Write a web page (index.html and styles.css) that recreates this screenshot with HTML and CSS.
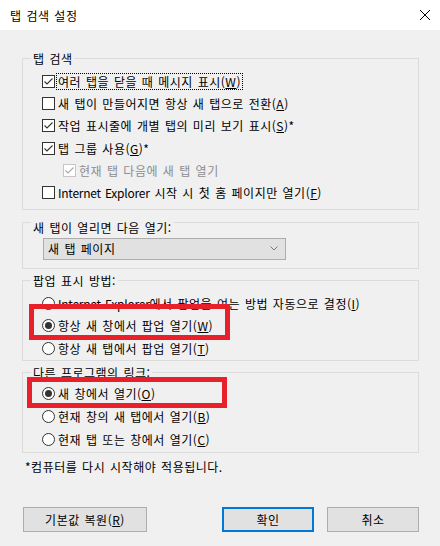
FILE: index.html
```html
<!DOCTYPE html>
<html lang="ko">
<head>
<meta charset="utf-8">
<title>탭 검색 설정</title>
<link rel="stylesheet" href="styles.css">
</head>
<body>
<div class="window">
  <header class="titlebar">
    <span class="title">탭 검색 설정</span>
    <svg class="close" width="12" height="12" viewBox="0 0 12 12"><path d="M1 1L11 11M11 1L1 11" stroke="#000" stroke-width="1"/></svg>
  </header>
  <main class="content">
    <fieldset class="group g1">
      <legend>탭 검색</legend>
      <div class="row"><svg class="cb" viewBox="0 0 13 13"><rect x="0.5" y="0.5" width="12" height="12" fill="#fff" stroke="#333"/><path d="M2.5 6.5L5 9L10.5 3.5" fill="none" stroke="#333" stroke-width="1.1"/></svg><span class="lbl focus">여러 탭을 닫을 때 메시지 표시(<u>W</u>)</span></div>
      <div class="row"><svg class="cb" viewBox="0 0 13 13"><rect x="0.5" y="0.5" width="12" height="12" fill="#fff" stroke="#333"/></svg><span class="lbl">새 탭이 만들어지면 항상 새 탭으로 전환(<u>A</u>)</span></div>
      <div class="row"><svg class="cb" viewBox="0 0 13 13"><rect x="0.5" y="0.5" width="12" height="12" fill="#fff" stroke="#333"/><path d="M2.5 6.5L5 9L10.5 3.5" fill="none" stroke="#333" stroke-width="1.1"/></svg><span class="lbl">작업 표시줄에 개별 탭의 미리 보기 표시(<u>S</u>)*</span></div>
      <div class="row"><svg class="cb" viewBox="0 0 13 13"><rect x="0.5" y="0.5" width="12" height="12" fill="#fff" stroke="#333"/><path d="M2.5 6.5L5 9L10.5 3.5" fill="none" stroke="#333" stroke-width="1.1"/></svg><span class="lbl">탭 그룹 사용(<u>G</u>)*</span></div>
      <div class="row sub disabled"><svg class="cb" viewBox="0 0 13 13"><rect x="0.5" y="0.5" width="12" height="12" fill="#fff" stroke="#c6c6c6"/><path d="M2.5 6.5L5 9L10.5 3.5" fill="none" stroke="#a8a8a8" stroke-width="1.1"/></svg><span class="lbl">현재 탭 다음에 새 탭 열기</span></div>
      <div class="row"><svg class="cb" viewBox="0 0 13 13"><rect x="0.5" y="0.5" width="12" height="12" fill="#fff" stroke="#333"/></svg><span class="lbl"><span class="latin">Internet Explorer</span> 시작 시 첫 홈 페이지만 열기(<u>F</u>)</span></div>
    </fieldset>

    <fieldset class="group g2">
      <legend>새 탭이 열리면 다음 열기:</legend>
      <div class="select"><span>새 탭 페이지</span><svg class="chev" width="8" height="5" viewBox="0 0 8 5"><path d="M0.5 0.5L4 4L7.5 0.5" fill="none" stroke="#7a7a7a" stroke-width="1"/></svg></div>
    </fieldset>

    <fieldset class="group g3">
      <legend>팝업 표시 방법:</legend>
      <div class="row r"><svg class="rb" viewBox="0 0 13 13"><circle cx="6.5" cy="6.5" r="6" fill="#fff" stroke="#333"/></svg><span class="lbl"><span class="latin">Internet Explorer</span>에서 팝업을 여는 방법 자동으로 결정(<u>I</u>)</span></div>
      <div class="row r"><svg class="rb" viewBox="0 0 13 13"><circle cx="6.5" cy="6.5" r="6" fill="#fff" stroke="#333"/><circle cx="6.5" cy="6.5" r="3.5" fill="#333"/></svg><span class="lbl">항상 새 창에서 팝업 열기(<u>W</u>)</span></div>
      <div class="row r"><svg class="rb" viewBox="0 0 13 13"><circle cx="6.5" cy="6.5" r="6" fill="#fff" stroke="#333"/></svg><span class="lbl">항상 새 탭에서 팝업 열기(<u>T</u>)</span></div>
    </fieldset>

    <fieldset class="group g4">
      <legend>다른 프로그램의 링크:</legend>
      <div class="row r4"><svg class="rb" viewBox="0 0 13 13"><circle cx="6.5" cy="6.5" r="6" fill="#fff" stroke="#333"/><circle cx="6.5" cy="6.5" r="3.5" fill="#333"/></svg><span class="lbl">새 창에서 열기(<u>O</u>)</span></div>
      <div class="row r4"><svg class="rb" viewBox="0 0 13 13"><circle cx="6.5" cy="6.5" r="6" fill="#fff" stroke="#333"/></svg><span class="lbl">현재 창의 새 탭에서 열기(<u>B</u>)</span></div>
      <div class="row r4"><svg class="rb" viewBox="0 0 13 13"><circle cx="6.5" cy="6.5" r="6" fill="#fff" stroke="#333"/></svg><span class="lbl">현재 탭 또는 창에서 열기(<u>C</u>)</span></div>
    </fieldset>

    <p class="note">*컴퓨터를 다시 시작해야 적용됩니다.</p>

    <div class="buttons">
      <button class="btn reset">기본값 복원(<u>R</u>)</button>
      <button class="btn ok default">확인</button>
      <button class="btn cancel">취소</button>
    </div>
  </main>
  <div class="mark mark1"></div>
  <div class="mark mark2"></div>
</div>
</body>
</html>
```

FILE: styles.css
```css
html, body {
  margin: 0;
  padding: 0;
}

body {
  width: 440px;
  height: 546px;
  overflow: hidden;
  background: #f0f0f0;
  color: #000;
  font-family: "Noto Sans CJK KR", "Noto Sans", sans-serif;
  font-size: 12px;
  line-height: 15px;
  letter-spacing: 0.5px;
  word-spacing: 1px;
}

.window {
  position: relative;
  width: 440px;
  height: 546px;
}

.titlebar {
  height: 30px;
  background: #fff;
  display: flex;
  align-items: center;
  justify-content: space-between;
  padding: 0 9px 0 10px;
  box-sizing: border-box;
}

.title {
  font-size: 12px;
  line-height: 15px;
}

.close {
  display: block;
}

.content {
  padding: 21px 21px 0 22px;
}

.group {
  margin: 0;
  padding: 0;
  border: 1px solid #dcdcdc;
  min-width: 0;
}

.group legend {
  margin-left: 8px;
  padding: 0 2px;
  line-height: 15px;
}

.g1 {
  padding: 4px 0 5px;
}

.g2 {
  padding: 3px 0 8px;
}

.g2 legend {
  padding-top: 10px;
}

.g3 {
  margin-top: 4px;
  padding: 4px 0 1px;
}

.g4 {
  margin-top: 4px;
  padding: 2px 0 1px;
}

.row {
  display: flex;
  align-items: center;
  height: 22.3px;
  padding-left: 19px;
}

.row.r {
  height: 22.5px;
}

.row.r4 {
  height: 23px;
}

.row.sub {
  padding-left: 40px;
}

.cb, .rb {
  width: 13px;
  height: 13px;
  flex: none;
  display: block;
}

.lbl {
  margin-left: 3px;
  white-space: nowrap;
}

.latin {
  letter-spacing: -0.25px;
}

.lbl.focus {
  margin-left: 1px;
  padding: 0 1px 0 1px;
  border: 1px dotted #000;
}

.disabled .lbl {
  color: #8d8d8d;
}

u {
  text-decoration: underline;
  text-underline-offset: 1px;
}

.select {
  margin-left: 20px;
  width: 243px;
  height: 22px;
  box-sizing: border-box;
  border: 1px solid #adadad;
  background: #e1e1e1;
  display: flex;
  align-items: center;
  justify-content: space-between;
  padding: 0 7px 0 4px;
}

.chev {
  display: block;
}

.note {
  margin: 6px 0 0 3px;
  line-height: 15px;
}

.buttons {
  display: flex;
  margin-top: 33px;
  padding: 0 0 0 1px;
}

.btn {
  height: 25px;
  box-sizing: border-box;
  border: 1px solid #adadad;
  background: #e1e1e1;
  font-family: inherit;
  font-size: 12px;
  letter-spacing: inherit;
  word-spacing: inherit;
  color: #000;
  padding: 0;
}

.btn.reset {
  width: 124px;
}

.btn.ok {
  width: 92px;
  margin-left: auto;
}

.btn.default {
  border: 2px solid #0078d7;
}

.btn.cancel {
  width: 92px;
  margin-left: 13px;
  margin-right: 0;
}

.mark {
  position: absolute;
  border: 5px solid #e8202a;
  box-sizing: border-box;
}

.mark1 {
  left: 29px;
  top: 304px;
  width: 201px;
  height: 36px;
}

.mark2 {
  left: 27px;
  top: 377px;
  width: 200px;
  height: 31px;
}
```
